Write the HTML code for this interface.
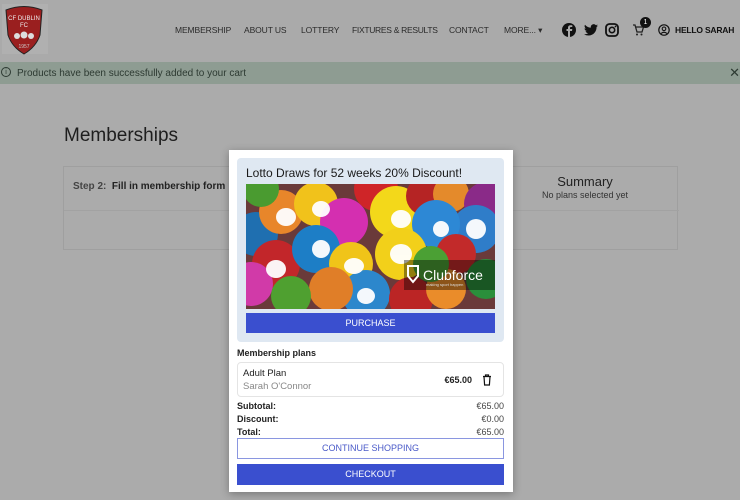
<!DOCTYPE html>
<html><head><style>
*{margin:0;padding:0;box-sizing:border-box}
body{width:740px;height:500px;overflow:hidden;background:#ababab;font-family:"Liberation Sans",sans-serif;position:relative;color:#222}
.hdr{position:absolute;left:0;top:0;width:740px;height:62px;background:#aaaaaa;box-shadow:0 2px 3px rgba(0,0,0,.15)}
.nav{position:absolute;top:25px;font-size:8.5px;color:#2a2a2a;white-space:nowrap;letter-spacing:-.1px}
.alert{position:absolute;left:0;top:62px;width:740px;height:22px;background:#8e9c92;font-size:10px;color:#2d3a32;padding:6px 0 0 17px}
.card{position:absolute;left:63px;top:166px;width:615px;height:84px;border:1px solid #9f9f9f}
.modal{position:absolute;left:229px;top:150px;width:284px;height:342px;background:#fff;box-shadow:0 2px 8px rgba(0,0,0,.3)}
.promo{position:absolute;left:8px;top:8px;width:267px;height:184px;background:#dfe8f2;border-radius:4px}
.btn{position:absolute;background:#3a4fcf;color:#fff;font-size:9px;text-align:center}
.row{position:absolute;left:8px;width:267px;font-size:9px}
</style></head><body>
<div class="hdr">
 <div style="position:absolute;left:2px;top:4px;width:46px;height:50px;background:#b0b0b0"></div>
 <svg style="position:absolute;left:4px;top:5px" width="40" height="50" viewBox="0 0 40 50"><path d="M2 5 Q20 -2 38 5 L36 30 Q32 42 20 49 Q8 42 4 30 Z" fill="#9a1f1f" stroke="#222" stroke-width="1"/><text x="20" y="15" font-size="6" fill="#eee" text-anchor="middle" font-family="Liberation Sans">CF DUBLIN</text><text x="20" y="22" font-size="6" fill="#eee" text-anchor="middle">FC</text><circle cx="13" cy="31" r="3" fill="#ddd"/><circle cx="20" cy="30" r="3.5" fill="#ddd"/><circle cx="27" cy="31" r="3" fill="#ddd"/><text x="20" y="43" font-size="5" fill="#ccc" text-anchor="middle">1957</text></svg>
 <div class="nav" style="left:175px">MEMBERSHIP</div>
 <div class="nav" style="left:244px">ABOUT US</div>
 <div class="nav" style="left:301px">LOTTERY</div>
 <div class="nav" style="left:352px;letter-spacing:-.3px">FIXTURES &amp; RESULTS</div>
 <div class="nav" style="left:449px">CONTACT</div>
 <div class="nav" style="left:504px">MORE... ▾</div>
 <svg style="position:absolute;left:562px;top:23px" width="14" height="14"><circle cx="7" cy="7" r="7" fill="#111"/><path d="M8 14V8h2l.3-2H8V5c0-.6.2-1 1-1h1.3V2.2H8.6C7 2.2 6 3 6 4.8V6H4.5v2H6v6z" fill="#aaa"/></svg>
 <svg style="position:absolute;left:584px;top:24px" width="14" height="12" viewBox="0 0 24 20"><path d="M24 2.4a10 10 0 0 1-2.8.8A5 5 0 0 0 23.3.5a10 10 0 0 1-3.1 1.2A4.9 4.9 0 0 0 11.8 6 14 14 0 0 1 1.7.9a4.9 4.9 0 0 0 1.5 6.6A4.9 4.9 0 0 1 1 6.9a4.9 4.9 0 0 0 3.9 4.9 5 5 0 0 1-2.2.1 4.9 4.9 0 0 0 4.6 3.4A9.9 9.9 0 0 1 0 17.3 14 14 0 0 0 7.5 19.5c9.1 0 14-7.5 14-14v-.6A10 10 0 0 0 24 2.4z" fill="#111"/></svg>
 <svg style="position:absolute;left:605px;top:23px" width="14" height="14"><rect x="1" y="1" width="12" height="12" rx="3.5" fill="none" stroke="#111" stroke-width="1.8"/><circle cx="7" cy="7" r="2.7" fill="none" stroke="#111" stroke-width="1.6"/><circle cx="10.5" cy="3.5" r=".9" fill="#111"/></svg>
 <svg style="position:absolute;left:632px;top:24px" width="12" height="12"><path d="M1 1h2l2 7h5l1.5-5H4" fill="none" stroke="#222" stroke-width="1.3"/><circle cx="5" cy="10.5" r="1" fill="#222"/><circle cx="9.5" cy="10.5" r="1" fill="#222"/></svg>
 <div style="position:absolute;left:640px;top:17px;width:11px;height:11px;border-radius:50%;background:#111;color:#fff;font-size:7px;text-align:center;line-height:11px">1</div>
 <svg style="position:absolute;left:658px;top:24px" width="12" height="12"><circle cx="6" cy="6" r="5.2" fill="none" stroke="#111" stroke-width="1.2"/><circle cx="6" cy="4.8" r="1.8" fill="none" stroke="#111" stroke-width="1.1"/><path d="M3 9.5Q6 7 9 9.5" fill="none" stroke="#111" stroke-width="1.1"/></svg>
 <div class="nav" style="left:675px;font-weight:bold;color:#111;letter-spacing:-.2px">HELLO SARAH</div>
</div>
<div class="alert"><span style="position:absolute;left:1px;top:5px;width:10px;height:10px;border:1px solid #2d3a32;border-radius:50%;font-size:7px;text-align:center;line-height:9px">i</span>Products have been successfully added to your cart<span style="position:absolute;right:0px;top:3px;font-size:13px">✕</span></div>
<div style="position:absolute;left:64px;top:125px;font-size:19px;color:#1e1e1e">Memberships</div>
<div class="card">
 <div style="position:absolute;left:0;top:0;width:615px;height:44px;border-bottom:1px solid #a2a2a2"></div>
 <div style="position:absolute;left:9px;top:14px;font-size:10px;font-weight:bold"><span style="color:#444">Step 2:</span>&nbsp; Fill in membership form</div>
 <div style="position:absolute;left:426px;top:0;width:189px;height:44px;border-left:1px solid #a2a2a2;text-align:center"><div style="font-size:13px;margin-top:7px;color:#222">Summary</div><div style="font-size:9px;color:#333;margin-top:1px">No plans selected yet</div></div>
</div>
<div class="modal">
 <div class="promo">
  <div style="position:absolute;left:9px;top:8px;font-size:12px;color:#1a1a1a">Lotto Draws for 52 weeks 20% Discount!</div>
  <svg style="position:absolute;left:9px;top:26px" width="249" height="125" viewBox="0 0 249 125">
   <rect width="249" height="125" fill="#6a3a3a"/>
   <g stroke="none">
   <circle cx="10" cy="50" r="22" fill="#1f6fb0"/><circle cx="35" cy="28" r="22" fill="#e8862a"/><circle cx="15" cy="5" r="18" fill="#4a9b30"/><circle cx="70" cy="20" r="22" fill="#f1c21b"/><circle cx="98" cy="38" r="24" fill="#d42fb0"/><circle cx="130" cy="5" r="22" fill="#cf2528"/><circle cx="150" cy="28" r="26" fill="#f3d81a"/><circle cx="180" cy="12" r="20" fill="#b52424"/><circle cx="205" cy="10" r="18" fill="#e48a2b"/><circle cx="240" cy="20" r="22" fill="#8a2a88"/><circle cx="230" cy="45" r="24" fill="#2f7dc9"/><circle cx="190" cy="40" r="24" fill="#2d88d5"/><circle cx="210" cy="70" r="20" fill="#c22a2a"/><circle cx="240" cy="95" r="20" fill="#2a8f3b"/><circle cx="30" cy="80" r="24" fill="#c2262a"/><circle cx="5" cy="100" r="22" fill="#d13aa8"/><circle cx="70" cy="65" r="24" fill="#1d7ec6"/><circle cx="105" cy="80" r="22" fill="#f0c419"/><circle cx="155" cy="70" r="26" fill="#f2d01a"/><circle cx="120" cy="110" r="24" fill="#2c87cc"/><circle cx="85" cy="105" r="22" fill="#e07e28"/><circle cx="45" cy="112" r="20" fill="#4fa030"/><circle cx="165" cy="115" r="22" fill="#bb2525"/><circle cx="200" cy="105" r="20" fill="#ea8c2a"/><circle cx="185" cy="80" r="18" fill="#4ba034"/>
   </g>
   <g fill="#fff" opacity=".95"><ellipse cx="40" cy="33" rx="10" ry="9"/><ellipse cx="75" cy="25" rx="9" ry="8"/><ellipse cx="155" cy="35" rx="10" ry="9"/><ellipse cx="230" cy="45" rx="10" ry="10"/><ellipse cx="30" cy="85" rx="10" ry="9"/><ellipse cx="75" cy="65" rx="9" ry="9"/><ellipse cx="108" cy="82" rx="10" ry="8"/><ellipse cx="155" cy="70" rx="11" ry="10"/><ellipse cx="120" cy="112" rx="9" ry="8"/><ellipse cx="195" cy="45" rx="8" ry="8"/></g>
   <rect x="158" y="76" width="91" height="30" fill="rgba(0,0,0,.4)"/>
   <path d="M162 82h10v10l-5 6-5-6z" fill="none" stroke="#fff" stroke-width="2"/>
   <text x="177" y="96" font-size="14" fill="#fff" font-family="Liberation Sans">Clubforce</text>
   <text x="180" y="102" font-size="4" fill="#ddd" font-family="Liberation Sans">making sport happen</text>
  </svg>
  <div class="btn" style="left:9px;top:155px;width:249px;height:20px;line-height:20px">PURCHASE</div>
 </div>
 <div class="row" style="top:198px;font-weight:bold;color:#222">Membership plans</div>
 <div style="position:absolute;left:8px;top:212px;width:267px;height:35px;border:1px solid #e4e4e4;border-radius:4px">
  <div style="position:absolute;left:5px;top:5px;font-size:9.5px;color:#222">Adult Plan</div>
  <div style="position:absolute;left:5px;top:18px;font-size:9.5px;color:#888">Sarah O'Connor</div>
  <div style="position:absolute;right:31px;top:12px;font-size:9px;font-weight:bold">€65.00</div>
  <svg style="position:absolute;left:244px;top:11px" width="10" height="12"><path d="M1 2.5h8M3.5 2.5V1h3v1.5M2 2.5l.6 8.5h4.8L8 2.5" fill="none" stroke="#111" stroke-width="1.2"/></svg>
 </div>
 <div class="row" style="top:251px"><b>Subtotal:</b><span style="float:right;color:#444">€65.00</span></div>
 <div class="row" style="top:264px"><b>Discount:</b><span style="float:right;color:#444">€0.00</span></div>
 <div class="row" style="top:277px"><b>Total:</b><span style="float:right;color:#444">€65.00</span></div>
 <div style="position:absolute;left:8px;top:288px;width:267px;height:21px;border:1px solid #8a96e0;color:#4a5ac8;font-size:9px;text-align:center;line-height:19px">CONTINUE SHOPPING</div>
 <div class="btn" style="left:8px;top:314px;width:267px;height:21px;line-height:21px">CHECKOUT</div>
</div>
</body></html>
